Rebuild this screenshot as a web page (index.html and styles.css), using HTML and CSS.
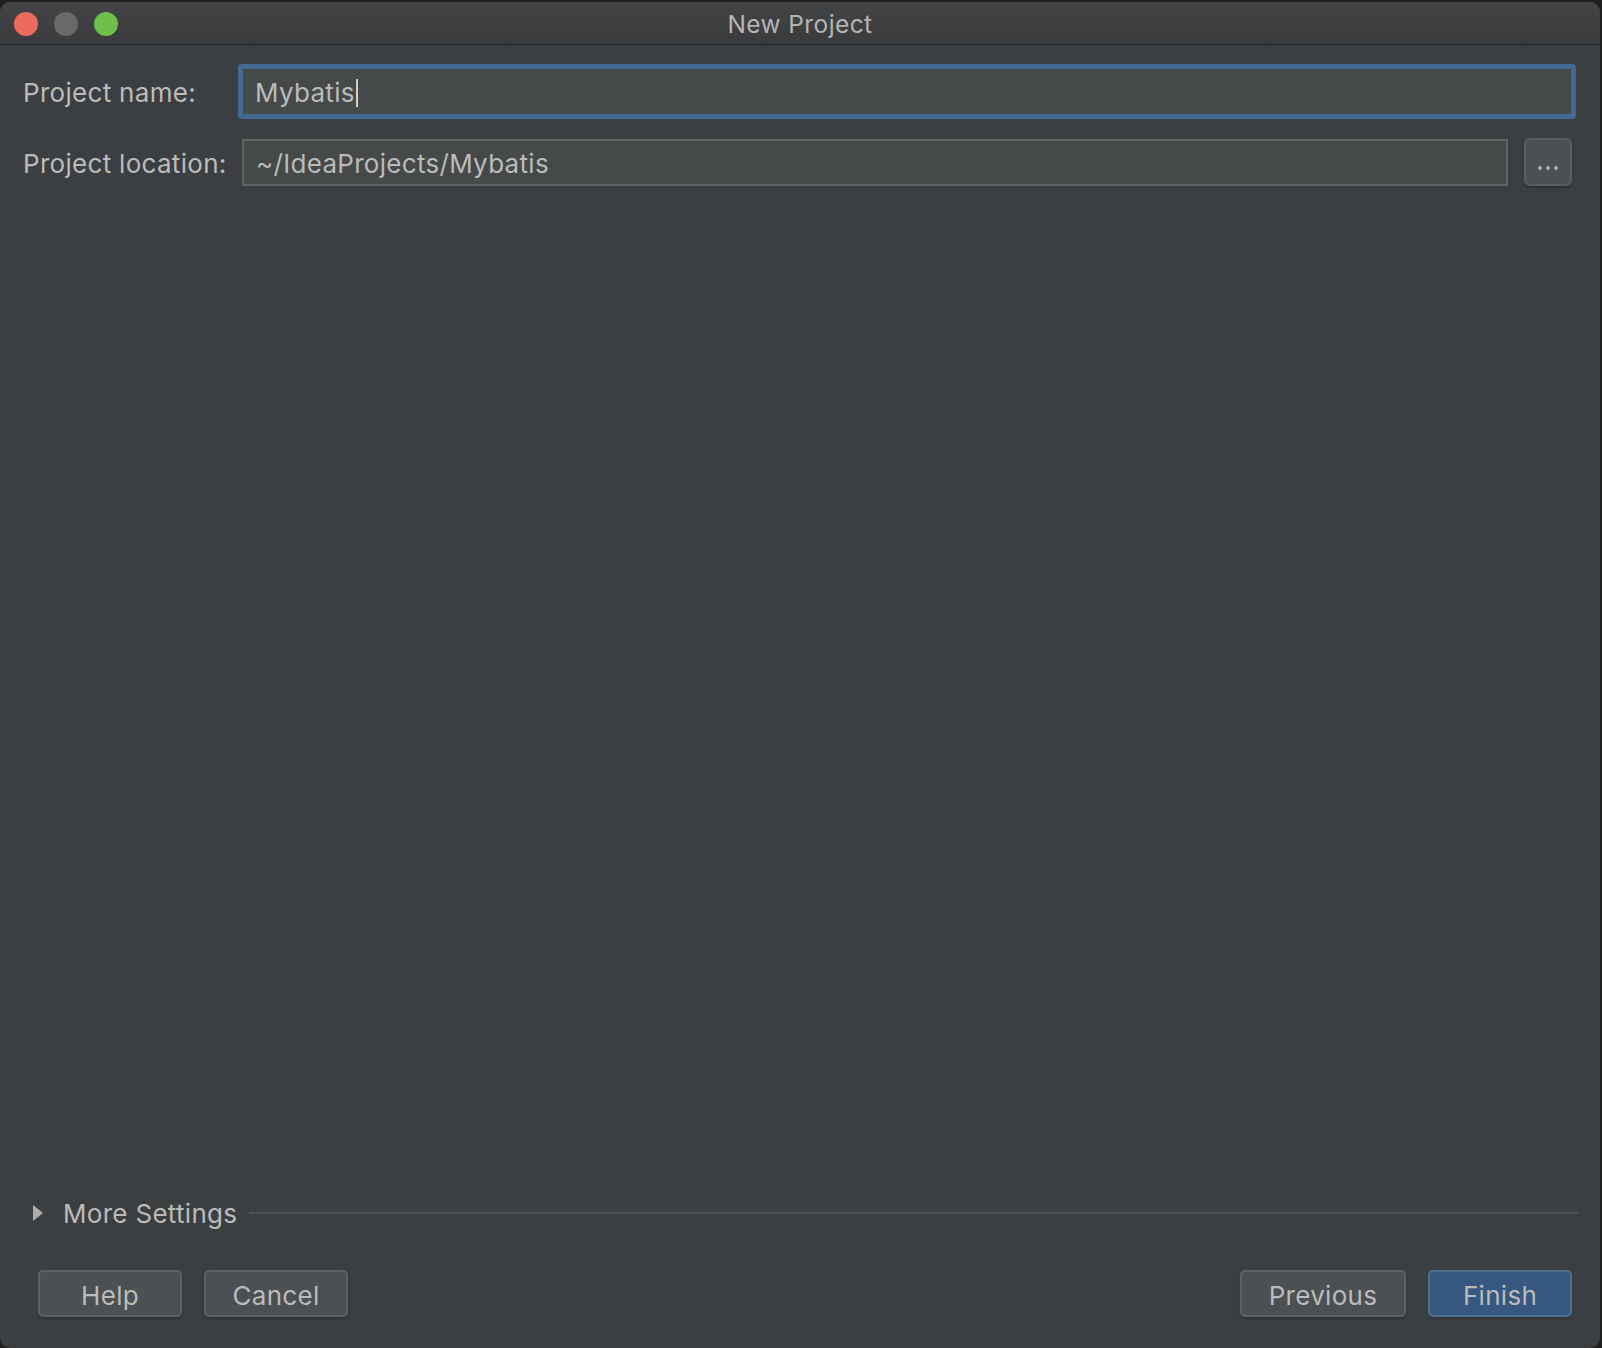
FILE: index.html
```html
<!DOCTYPE html>
<html lang="en">

<head>
    <meta charset="UTF-8" />
    <title>New Project</title>
    <link rel="stylesheet" href="styles.css">
</head>

<body>

    <div class="window">
        <div class="titlebar">
            <div class="lights">
                <span class="light close"></span>
                <span class="light min"></span>
                <span class="light max"></span>
            </div>
            <div class="title">New Project</div>
        </div>

        <div class="form">
            <div class="row">
                <label class="label" for="projectName">Project name:</label>
                <div class="field field-focus" id="projectName">Mybatis<span class="caret"></span></div>
            </div>
            <div class="row">
                <label class="label" for="projectLocation">Project location:</label>
                <div class="field" id="projectLocation">~/IdeaProjects/Mybatis</div>
                <button class="browse"><span></span><span></span><span></span></button>
            </div>
        </div>

        <div class="spacer"></div>

        <div class="more">
            <span class="arrow"></span>
            <span class="more-text">More Settings</span>
            <div class="more-line"></div>
        </div>

        <div class="buttons">
            <button class="btn">Help</button>
            <button class="btn">Cancel</button>
            <div class="spacer"></div>
            <button class="btn btn-wide">Previous</button>
            <button class="btn btn-default">Finish</button>
        </div>
    </div>

</body>

</html>
```

FILE: styles.css
```css
* {
    box-sizing: border-box;
    margin: 0;
    padding: 0;
}

body {
    background-color: #1f1f20;
    font-family: Inter, "Liberation Sans", Arial, sans-serif;
    color: #bbbbbb;
    width: 1602px;
    height: 1348px;
    overflow: hidden;
}

.window {
    margin-top: 2px;
    width: 1600px;
    height: 1346px;
    background: #3c3f41;
    border-radius: 10px;
    overflow: hidden;
    display: flex;
    flex-direction: column;
}

/* barra de titulo */
.titlebar {
    height: 43px;
    background: linear-gradient(#434446, #3a3b3d);
    border-bottom: 1px solid #1e1f20;
    display: flex;
    align-items: center;
    justify-content: center;
    position: relative;
}

.lights {
    position: absolute;
    left: 14px;
    top: 10px;
    display: flex;
    gap: 16px;
}

.light {
    width: 24px;
    height: 24px;
    border-radius: 50%;
}

.close {
    background: #ed6a5e;
}

.min {
    background: #69696b;
}

.max {
    background: #6cbf4a;
}

.title {
    font-size: 24.5px;
    color: #b4b4b4;
    letter-spacing: 0.4px;
    margin-top: 2px;
}

/* formulario */
.form {
    padding: 19px 24px 0 23px;
    display: flex;
    flex-direction: column;
    gap: 19px;
}

.row {
    display: flex;
    align-items: center;
}

.label {
    width: 215px;
    font-size: 26px;
    letter-spacing: 0.3px;
    color: #bbbbbb;
    flex-shrink: 0;
    margin-top: 2px;
}

.field {
    flex: 1;
    height: 47px;
    background: #45494a;
    border: 2px solid #646464;
    font-size: 26px;
    letter-spacing: 0.3px;
    color: #bbbbbb;
    padding-left: 12px;
    padding-top: 2px;
    display: flex;
    align-items: center;
    margin-left: 4px;
}

.field-focus {
    height: 55px;
    margin-left: 0;
    border: 5px solid #426a92;
    border-radius: 4px;
    padding-left: 12px;
}

.caret {
    display: inline-block;
    width: 2px;
    height: 28px;
    background: #d0d0d0;
    margin-left: 1px;
}

.browse {
    width: 48px;
    height: 48px;
    margin-left: 16px;
    margin-right: 4px;
    background: #4c5052;
    border: 2px solid #5b5e60;
    border-radius: 6px;
    box-shadow: 0 2px 2px rgba(0, 0, 0, 0.2);
    display: flex;
    align-items: flex-end;
    justify-content: center;
    gap: 4px;
    padding-bottom: 14px;
}

.browse span {
    width: 4px;
    height: 4px;
    border-radius: 50%;
    background: #b0b0b0;
}

.spacer {
    flex: 1;
}

/* mais configuracoes */
.more {
    display: flex;
    align-items: center;
    padding: 0 22px 0 33px;
    height: 30px;
}

.arrow {
    width: 0;
    height: 0;
    border-top: 8px solid transparent;
    border-bottom: 8px solid transparent;
    border-left: 10px solid #adadad;
}

.more-text {
    font-size: 26px;
    letter-spacing: 0.3px;
    color: #bbbbbb;
    margin-left: 20px;
}

.more-line {
    flex: 1;
    height: 2px;
    background: #505355;
    margin-left: 12px;
}

/* botoes */
.buttons {
    display: flex;
    padding: 42px 28px 31px 38px;
    gap: 22px;
}

.btn {
    width: 144px;
    height: 47px;
    padding-top: 3px;
    background: #4c5052;
    border: 2px solid #5e6163;
    border-radius: 5px;
    box-shadow: 0 2px 2px rgba(0, 0, 0, 0.2);
    font-family: Inter, "Liberation Sans", Arial, sans-serif;
    font-size: 26px;
    letter-spacing: 0.3px;
    color: #bbbbbb;
}

.btn-wide {
    width: 166px;
}

.btn-default {
    background: #365880;
    border-color: #4c708c;
}
```
